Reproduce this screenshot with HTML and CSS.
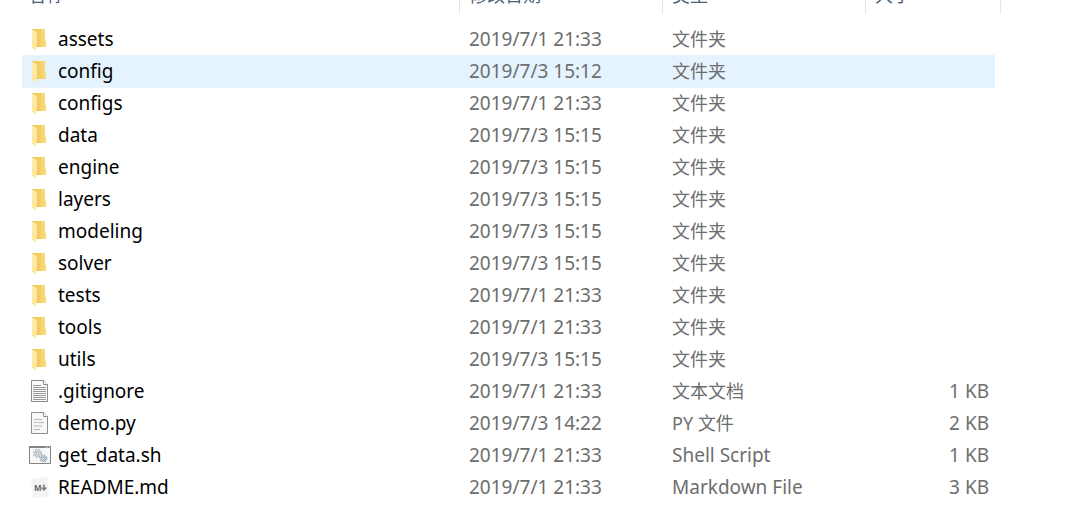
FILE: index.html
```html
<!DOCTYPE html>
<html lang="zh-CN">
<head>
    <meta charset="UTF-8">
    <title>文件列表</title>
    <link rel="stylesheet" href="styles.css">
</head>
<body>
    <!-- Shared icons -->
    <svg class="icon-defs" aria-hidden="true">
        <defs>
            <linearGradient id="folder-back" x1="0" y1="0" x2="1" y2="0">
                <stop offset="0.3" stop-color="#eec75c"/>
                <stop offset="1" stop-color="#fbdb7c"/>
            </linearGradient>
            <linearGradient id="folder-front" x1="0" y1="0" x2="1" y2="1">
                <stop offset="0" stop-color="#ffedb0"/>
                <stop offset="1" stop-color="#ffe292"/>
            </linearGradient>
        </defs>
        <symbol id="icon-folder" viewBox="0 0 24 24">
            <path d="M4 2H17V13L18 14V20H4Z" fill="url(#folder-back)"/>
            <path d="M4 2.3L9 5V18.6L8 20V23L4 21Z" fill="url(#folder-front)"/>
        </symbol>
        <symbol id="icon-text" viewBox="0 0 24 24">
            <path d="M3.5 1.5H15.5L19.5 5.5V22.5H3.5Z" fill="#fafafa" stroke="#8b8b8b"/>
            <path d="M15.5 1.5V5.5H19.5" fill="#fff" stroke="#8b8b8b"/>
            <path d="M5 6.5H13M5 8.5H18M5 10.5H18M5 12.5H18M5 14.5H18M5 16.5H18M5 18.5H18M5 20.5H18" stroke="#999"/>
        </symbol>
        <symbol id="icon-file" viewBox="0 0 24 24">
            <path d="M3.5 1.5H15.5L19.5 5.5V22.5H3.5Z" fill="#f7f7f7" stroke="#8f8f8f"/>
            <path d="M15.5 1.5V5.5H19.5" fill="#fff" stroke="#8f8f8f"/>
            <path d="M6 8.5H14M6 11.5H9M10 11.5H16M6 15H14M6 18.5H12" stroke="#b8b8b8"/>
        </symbol>
        <symbol id="icon-script" viewBox="0 0 24 24">
            <path d="M1.5 3.5H22.5V20.5H1.5Z" fill="#f8f8f8" stroke="#858585"/>
            <path d="M1 4H23" stroke="#858585" stroke-width="2"/>
            <path d="M17 4H18M19 4H20M21 4H22" stroke="#e8e8e8"/>
            <circle cx="9.5" cy="10.5" r="4" fill="none" stroke="#b3bbc0" stroke-width="1.6" stroke-dasharray="1.6 1.54"/>
            <circle cx="9.5" cy="10.5" r="3" fill="#e3e8eb" stroke="#b3bbc0"/>
            <circle cx="9.5" cy="10.5" r="1.3" fill="#fff" stroke="#9aa5ab"/>
            <circle cx="15.5" cy="15.5" r="3.2" fill="none" stroke="#94aab6" stroke-width="1.6" stroke-dasharray="1.3 1.21"/>
            <circle cx="15.5" cy="15.5" r="2.4" fill="#dceaf1" stroke="#a2b6c1"/>
            <circle cx="15.5" cy="15.5" r="1" fill="#fff" stroke="#8da3af"/>
        </symbol>
        <symbol id="icon-markdown" viewBox="0 0 24 24">
            <path d="M3 4L19 2L21 21L5 23.5Z" fill="#f3f3f3"/>
            <text x="6" y="16" class="icon-letter">M</text>
            <path d="M16 9.5V15M13.8 12.6L16 15L18.2 12.6" fill="none" stroke="#777" stroke-width="1.5"/>
        </symbol>
    </svg>

    <main class="explorer">
        <table class="file-list">
            <colgroup>
                <col class="col-name">
                <col class="col-date">
                <col class="col-type">
                <col class="col-size">
                <col class="col-end">
            </colgroup>
            <thead>
                <tr>
                    <th>名称</th>
                    <th>修改日期</th>
                    <th>类型</th>
                    <th class="last">大小</th>
                    <td class="end"></td>
                </tr>
            </thead>
            <tbody>
                <tr class="spacer"><td colspan="5"></td></tr>
                <tr>
                    <td><div class="name"><svg class="icon"><use href="#icon-folder"/></svg>assets</div></td>
                    <td>2019/7/1 21:33</td>
                    <td><span class="cjk">文件夹</span></td>
                    <td class="size"></td>
                </tr>
                <tr class="hovered">
                    <td><div class="name"><svg class="icon"><use href="#icon-folder"/></svg>config</div></td>
                    <td>2019/7/3 15:12</td>
                    <td><span class="cjk">文件夹</span></td>
                    <td class="size"></td>
                </tr>
                <tr>
                    <td><div class="name"><svg class="icon"><use href="#icon-folder"/></svg>configs</div></td>
                    <td>2019/7/1 21:33</td>
                    <td><span class="cjk">文件夹</span></td>
                    <td class="size"></td>
                </tr>
                <tr>
                    <td><div class="name"><svg class="icon"><use href="#icon-folder"/></svg>data</div></td>
                    <td>2019/7/3 15:15</td>
                    <td><span class="cjk">文件夹</span></td>
                    <td class="size"></td>
                </tr>
                <tr>
                    <td><div class="name"><svg class="icon"><use href="#icon-folder"/></svg>engine</div></td>
                    <td>2019/7/3 15:15</td>
                    <td><span class="cjk">文件夹</span></td>
                    <td class="size"></td>
                </tr>
                <tr>
                    <td><div class="name"><svg class="icon"><use href="#icon-folder"/></svg>layers</div></td>
                    <td>2019/7/3 15:15</td>
                    <td><span class="cjk">文件夹</span></td>
                    <td class="size"></td>
                </tr>
                <tr>
                    <td><div class="name"><svg class="icon"><use href="#icon-folder"/></svg>modeling</div></td>
                    <td>2019/7/3 15:15</td>
                    <td><span class="cjk">文件夹</span></td>
                    <td class="size"></td>
                </tr>
                <tr>
                    <td><div class="name"><svg class="icon"><use href="#icon-folder"/></svg>solver</div></td>
                    <td>2019/7/3 15:15</td>
                    <td><span class="cjk">文件夹</span></td>
                    <td class="size"></td>
                </tr>
                <tr>
                    <td><div class="name"><svg class="icon"><use href="#icon-folder"/></svg>tests</div></td>
                    <td>2019/7/1 21:33</td>
                    <td><span class="cjk">文件夹</span></td>
                    <td class="size"></td>
                </tr>
                <tr>
                    <td><div class="name"><svg class="icon"><use href="#icon-folder"/></svg>tools</div></td>
                    <td>2019/7/1 21:33</td>
                    <td><span class="cjk">文件夹</span></td>
                    <td class="size"></td>
                </tr>
                <tr>
                    <td><div class="name"><svg class="icon"><use href="#icon-folder"/></svg>utils</div></td>
                    <td>2019/7/3 15:15</td>
                    <td><span class="cjk">文件夹</span></td>
                    <td class="size"></td>
                </tr>
                <tr>
                    <td><div class="name"><svg class="icon"><use href="#icon-text"/></svg>.gitignore</div></td>
                    <td>2019/7/1 21:33</td>
                    <td><span class="cjk">文本文档</span></td>
                    <td class="size">1 KB</td>
                </tr>
                <tr>
                    <td><div class="name"><svg class="icon"><use href="#icon-file"/></svg>demo.py</div></td>
                    <td>2019/7/3 14:22</td>
                    <td><span class="cjk">PY 文件</span></td>
                    <td class="size">2 KB</td>
                </tr>
                <tr>
                    <td><div class="name"><svg class="icon"><use href="#icon-script"/></svg>get_data.sh</div></td>
                    <td>2019/7/1 21:33</td>
                    <td>Shell Script</td>
                    <td class="size">1 KB</td>
                </tr>
                <tr>
                    <td><div class="name"><svg class="icon"><use href="#icon-markdown"/></svg>README.md</div></td>
                    <td>2019/7/1 21:33</td>
                    <td>Markdown File</td>
                    <td class="size">3 KB</td>
                </tr>
            </tbody>
        </table>
    </main>
</body>
</html>
```

FILE: styles.css
```css
body {
    margin: 0;
    background: white;
    color: #6d6d6d;
    font-family: "Noto Sans", "Noto Sans CJK SC", sans-serif;
    font-size: 19px;
    line-height: 24px;
    overflow: hidden;
}

.icon-defs {
    display: block;
    width: 0;
    height: 0;
}

/* The list is scrolled, so the header is partly above the window */
.explorer {
    margin-top: -24px;
    padding: 0 91px 0 22px;
}

.file-list {
    width: 100%;
    table-layout: fixed;
    border-collapse: separate;
    border-spacing: 0;
}

.col-date,
.col-type {
    width: 203px;
}

.col-size {
    width: 129px;
}

.col-end {
    width: 6px;
}

th {
    height: 38px;
    padding: 0 0 0 9px;
    border-right: 1px solid #e5e5e5;
    box-sizing: border-box;
    color: #4c607a;
    font-size: 18px;
    font-weight: normal;
    text-align: left;
}

th:first-child {
    padding-left: 6px;
}

th.last {
    border-right: none;
}

.end {
    padding: 0;
    border-right: 1px solid #e5e5e5;
}

td {
    height: 32px;
    padding: 0 0 0 9px;
    white-space: nowrap;
}

td:first-child {
    padding-left: 6px;
}

.spacer td {
    height: 9px;
    padding: 0;
}

.hovered td {
    background: #e5f3ff;
    box-shadow: 0 1px #e5f3ff;
}

.name {
    display: flex;
    align-items: center;
    gap: 6px;
    color: black;
}

.icon {
    width: 24px;
    height: 24px;
    flex-shrink: 0;
}

.icon-letter {
    font-family: "Noto Sans", sans-serif;
    font-size: 8px;
    font-weight: bold;
    fill: #666;
}

.cjk {
    font-size: 18px;
}

td.size {
    padding: 0 6px 0 0;
    text-align: right;
}
```
